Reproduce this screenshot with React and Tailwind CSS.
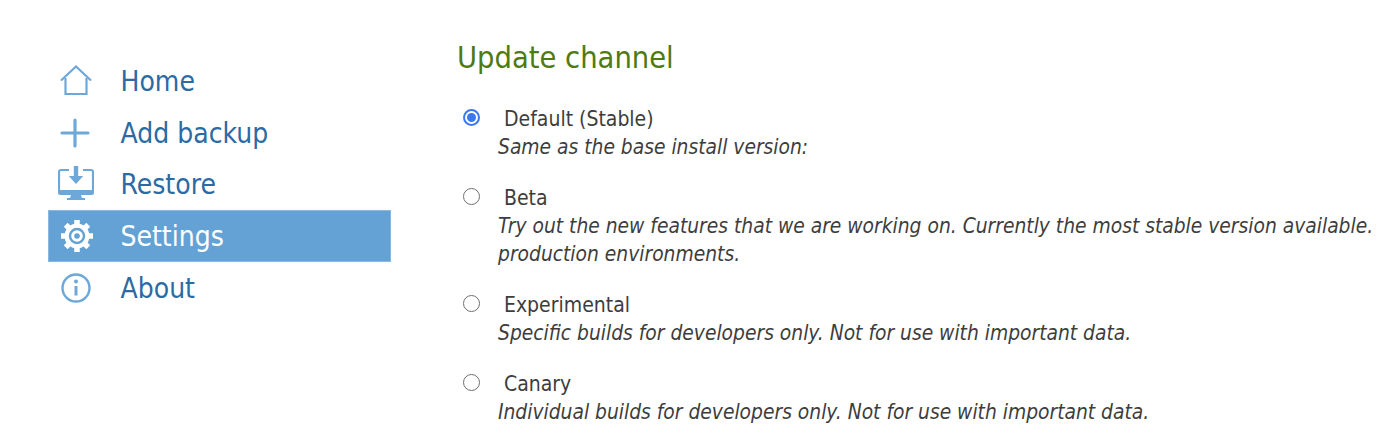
const navItems = [
  {
    label: "Home",
    icon: (
      <svg width="32" height="31" viewBox="0 0 32 31" fill="none" stroke="#6ea8d9" strokeWidth="2.2">
        <path d="M1 15.500 16 1.500l15 14" />
        <path d="M5.500 13v16h21V13" />
      </svg>
    ),
  },
  {
    label: "Add backup",
    icon: (
      <svg width="30" height="30" viewBox="0 0 30 30" fill="none" stroke="#6ea8d9" strokeWidth="3.2" strokeLinecap="round" className="mt-[2px] -ml-px">
        <path d="M15 2v26M2 15h26" />
      </svg>
    ),
  },
  {
    label: "Restore",
    icon: (
      <svg width="36" height="35" viewBox="0 0 36 35" fill="none">
        <path d="M11 4H3a2 2 0 0 0-2 2v20h34V6a2 2 0 0 0-2-2h-8" stroke="#6ea8d9" strokeWidth="2.2" />
        <path d="M0 24h36v3a2 2 0 0 1-2 2H2a2 2 0 0 1-2-2z" fill="#6ea8d9" />
        <path d="M13 29h10l1 3h3v2H9v-2h3z" fill="#6ea8d9" />
        <path d="M15.800 0h4.400v10h5L18 18l-7.200-8h5z" fill="#6ea8d9" />
      </svg>
    ),
  },
  {
    label: "Settings",
    active: true,
    icon: (
      <svg width="34" height="34" viewBox="0 0 34 34" fill="none">
        <circle cx="17" cy="17" r="12.500" fill="#fff" />
        <g stroke="#fff" strokeWidth="5.500">
          <path d="M17 1v6M17 27v6M1 17h6M27 17h6M5.700 5.700l4.200 4.200M24.100 24.100l4.200 4.200M5.700 28.300l4.200-4.200M24.100 9.900l4.200-4.200" />
        </g>
        <circle cx="17" cy="17" r="7" stroke="#64a1d4" strokeWidth="2.400" />
        <circle cx="17" cy="17" r="2.800" fill="#64a1d4" />
      </svg>
    ),
  },
  {
    label: "About",
    icon: (
      <svg width="30" height="30" viewBox="0 0 30 30" fill="none" className="mt-[2px]">
        <circle cx="15" cy="15" r="13.500" stroke="#6ea8d9" strokeWidth="2.400" />
        <circle cx="15" cy="8.500" r="2" fill="#6ea8d9" />
        <path d="M15 13v9.500" stroke="#6ea8d9" strokeWidth="3" />
      </svg>
    ),
  },
];

const channels = [
  { name: "Default (Stable)", checked: true, text: ["Same as the base install version:"] },
  {
    name: "Beta",
    text: [
      "Try out the new features that we are working on. Currently the most stable version available.",
      "production environments.",
    ],
  },
  { name: "Experimental", text: ["Specific builds for developers only. Not for use with important data."] },
  { name: "Canary", text: ["Individual builds for developers only. Not for use with important data."] },
];

function Radio({ checked }) {
  return checked ? (
    <span className="w-[17px] h-[17px] -mt-[5px] rounded-full border-2 border-[#3b78f0] flex items-center justify-center shrink-0">
      <span className="w-[9px] h-[9px] rounded-full bg-[#3b78f0]" />
    </span>
  ) : (
    <span className="w-[17px] h-[17px] -mt-[5px] rounded-full border-[1.500px] border-[#6e6e6e] bg-white shrink-0" />
  );
}

export default function App() {
  return (
    <div className="w-[1380px] h-[448px] overflow-hidden bg-white flex font-['DejaVu_Sans',sans-serif] font-stretch-condensed">
      <div className="w-[343px] ml-[47.500px] mt-[55px] shrink-0">
        {navItems.map((item) => (
          <div
            key={item.label}
            className={
              item.active
                ? "h-[52px] flex items-center bg-[#64a1d4] border border-[#8ab9e0] text-white"
                : "h-[51.500px] flex items-center text-[#2a6aa5]"
            }
          >
            <div className="w-[56px] flex justify-center shrink-0">{item.icon}</div>
            <span className={item.active ? "ml-[16px] pt-[3px] text-[28px]" : "ml-[17px] pt-[3px] text-[28px]"}>{item.label}</span>
          </div>
        ))}
      </div>
      <div className="ml-[66.500px] pt-[36px] whitespace-nowrap">
        <h1 className="text-[30.500px] leading-[44px] text-[#4f7a12]">Update channel</h1>
        <div className="mt-[25px]">
          {channels.map((c) => (
            <div key={c.name} className="mb-[23px] text-[#3d3d3d]">
              <div className="flex items-center h-[28px] ml-[6px] pt-[2px]">
                <Radio checked={c.checked} />
                <span className="ml-[24px] text-[21px]">{c.name}</span>
              </div>
              {c.text.map((t) => (
                <p key={t} className="ml-[41px] text-[20.800px] leading-[28px] italic">{t}</p>
              ))}
            </div>
          ))}
        </div>
      </div>
    </div>
  );
}
